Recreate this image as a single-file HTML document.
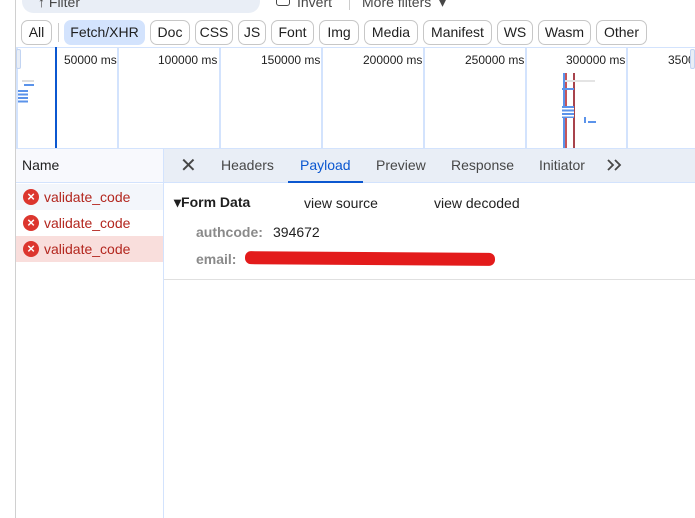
<!DOCTYPE html>
<html><head><meta charset="utf-8"><style>
*{margin:0;padding:0;box-sizing:border-box}
body{width:695px;height:518px;background:#fff;font-family:"Liberation Sans",sans-serif;position:relative;overflow:hidden;color:#1f1f1f}
.a{position:absolute}
.chip{position:absolute;top:20px;height:25px;border:1px solid #c7c7c7;border-radius:7px;font-size:14px;line-height:23px;text-align:center;color:#1f1f1f}
.gl{position:absolute;top:47px;height:101px;width:2px;background:#d3e3fd}
.tl{position:absolute;top:53px;font-size:12px;color:#1f1f1f;text-align:right}
.row{position:absolute;left:16px;width:147px;height:26px;font-size:14px;color:#b3261e;line-height:26px;padding-left:28px}
.x{position:absolute;left:7px;top:5px;width:16px;height:16px;border-radius:50%;background:#dc362e;color:#fff;font-size:13px;line-height:16px;text-align:center;font-weight:bold}
.tab{position:absolute;top:157px;font-size:14px;color:#474747}
</style></head><body>
<div class="a" style="left:15px;top:0;width:1px;height:518px;background:#d0d0d0"></div>
<div class="a" style="left:22px;top:-10px;width:238px;height:23px;background:#e9eef6;border-radius:12px"></div>
<div class="a" style="left:38px;top:-6px;font-size:14px;color:#474747">↑ Filter</div>
<div class="a" style="left:276px;top:-8px;width:14px;height:14px;border:1.5px solid #474747;border-radius:3px"></div>
<div class="a" style="left:297px;top:-6px;font-size:14px;color:#474747">Invert</div>
<div class="a" style="left:349px;top:-4px;width:1px;height:14px;background:#ccc"></div>
<div class="a" style="left:362px;top:-6px;font-size:14px;color:#474747">More filters &nbsp;▾</div>

<div class="chip" style="left:21px;width:31px">All</div>
<div class="a" style="left:58px;top:23px;width:1px;height:19px;background:#ccc"></div>
<div class="chip" style="left:64px;width:81px;background:#d3e3fd;border-color:#d3e3fd">Fetch/XHR</div>
<div class="chip" style="left:150px;width:40px">Doc</div>
<div class="chip" style="left:195px;width:38px">CSS</div>
<div class="chip" style="left:238px;width:28px">JS</div>
<div class="chip" style="left:271px;width:43px">Font</div>
<div class="chip" style="left:319px;width:40px">Img</div>
<div class="chip" style="left:364px;width:54px">Media</div>
<div class="chip" style="left:423px;width:69px">Manifest</div>
<div class="chip" style="left:497px;width:36px">WS</div>
<div class="chip" style="left:538px;width:53px">Wasm</div>
<div class="chip" style="left:596px;width:51px">Other</div>

<div class="a" style="left:16px;top:47px;width:679px;height:1px;background:#d3e3fd"></div>
<div class="a" style="left:16px;top:47px;width:2px;height:101px;background:#d3e3fd"></div>
<div class="a" style="left:16px;top:49px;width:5px;height:20px;background:#e9eef6;border:1px solid #c2d4f2;border-radius:2px"></div>
<div class="gl" style="left:117px"></div><div class="gl" style="left:219px"></div><div class="gl" style="left:321px"></div><div class="gl" style="left:423px"></div><div class="gl" style="left:525px"></div><div class="gl" style="left:626px"></div>
<div class="a" style="left:55px;top:47px;width:2px;height:101px;background:#0b57d0"></div>
<div class="tl" style="left:64px">50000 ms</div>
<div class="tl" style="left:158px">100000 ms</div>
<div class="tl" style="left:261px">150000 ms</div>
<div class="tl" style="left:363px">200000 ms</div>
<div class="tl" style="left:465px">250000 ms</div>
<div class="tl" style="left:566px">300000 ms</div>
<div class="tl" style="left:668px">3500</div>
<div class="a" style="left:690px;top:49px;width:5px;height:20px;background:#e9eef6;border:1px solid #c2d4f2;border-radius:2px"></div>
<div class="a" style="left:22px;top:80px;width:12px;height:2px;background:#ddd"></div>
<div class="a" style="left:24px;top:84px;width:10px;height:2px;background:#5b93ea"></div>
<div class="a" style="left:18px;top:90px;width:10px;height:14px;background:repeating-linear-gradient(#5b93ea 0 2px,#fff 2px 3.5px)"></div>
<div class="a" style="left:563px;top:73px;width:2px;height:75px;background:#5b93ea"></div>
<div class="a" style="left:565px;top:73px;width:2px;height:75px;background:#c4555b"></div>
<div class="a" style="left:573px;top:73px;width:2px;height:75px;background:#a8434c"></div>
<div class="a" style="left:565px;top:80px;width:30px;height:2px;background:#e4e4e4"></div>
<div class="a" style="left:562px;top:88px;width:12px;height:2px;background:#5b93ea"></div>
<div class="a" style="left:562px;top:106px;width:12px;height:12px;background:repeating-linear-gradient(#5b93ea 0 2px,#fff 2px 3.5px)"></div>
<div class="a" style="left:584px;top:117px;width:2px;height:6px;background:#5b93ea"></div>
<div class="a" style="left:588px;top:121px;width:8px;height:2px;background:#5b93ea"></div>

<div class="a" style="left:16px;top:148px;width:679px;height:1px;background:#d3e3fd"></div>
<div class="a" style="left:16px;top:149px;width:147px;height:34px;background:#f8f9fd;border-bottom:1px solid #d3e3fd"></div>
<div class="a" style="left:22px;top:157px;font-size:14px;color:#1f1f1f">Name</div>
<div class="a" style="left:163px;top:149px;width:1px;height:369px;background:#d3e3fd"></div>
<div class="a" style="left:164px;top:149px;width:531px;height:34px;background:#e9eef6;border-bottom:1px solid #d3e3fd"></div>
<div class="a" style="left:180px;top:153px;font-size:20px;color:#474747">✕</div>
<div class="tab" style="left:221px">Headers</div>
<div class="tab" style="left:300px;color:#0b57d0">Payload</div>
<div class="a" style="left:288px;top:181px;width:75px;height:2px;background:#0b57d0"></div>
<div class="tab" style="left:376px">Preview</div>
<div class="tab" style="left:451px">Response</div>
<div class="tab" style="left:539px">Initiator</div>
<svg class="a" style="left:606px;top:158px" width="18" height="14" viewBox="0 0 18 14"><path d="M2 2l5 5-5 5M9 2l5 5-5 5" fill="none" stroke="#474747" stroke-width="1.8"/></svg>

<div class="row" style="top:184px;background:#f3f6fb"><div class="x">×</div>validate_code</div>
<div class="row" style="top:210px"><div class="x">×</div>validate_code</div>
<div class="row" style="top:236px;background:#f9dedc"><div class="x">×</div>validate_code</div>

<div class="a" style="left:174px;top:194px;font-size:14px;font-weight:bold;color:#1f1f1f">▾Form Data</div>
<div class="a" style="left:304px;top:195px;font-size:14px">view source</div>
<div class="a" style="left:434px;top:195px;font-size:14px">view decoded</div>
<div class="a" style="left:196px;top:224px;font-size:14px;font-weight:bold;color:#8a8a8a">authcode:</div>
<div class="a" style="left:273px;top:224px;font-size:14px">394672</div>
<div class="a" style="left:196px;top:251px;font-size:14px;font-weight:bold;color:#8a8a8a">email:</div>
<div class="a" style="left:245px;top:252px;width:250px;height:13px;background:#e31b1b;border-radius:6px;transform:rotate(0.4deg)"></div>
<div class="a" style="left:164px;top:279px;width:531px;height:1px;background:#e0e0e0"></div>
</body></html>
